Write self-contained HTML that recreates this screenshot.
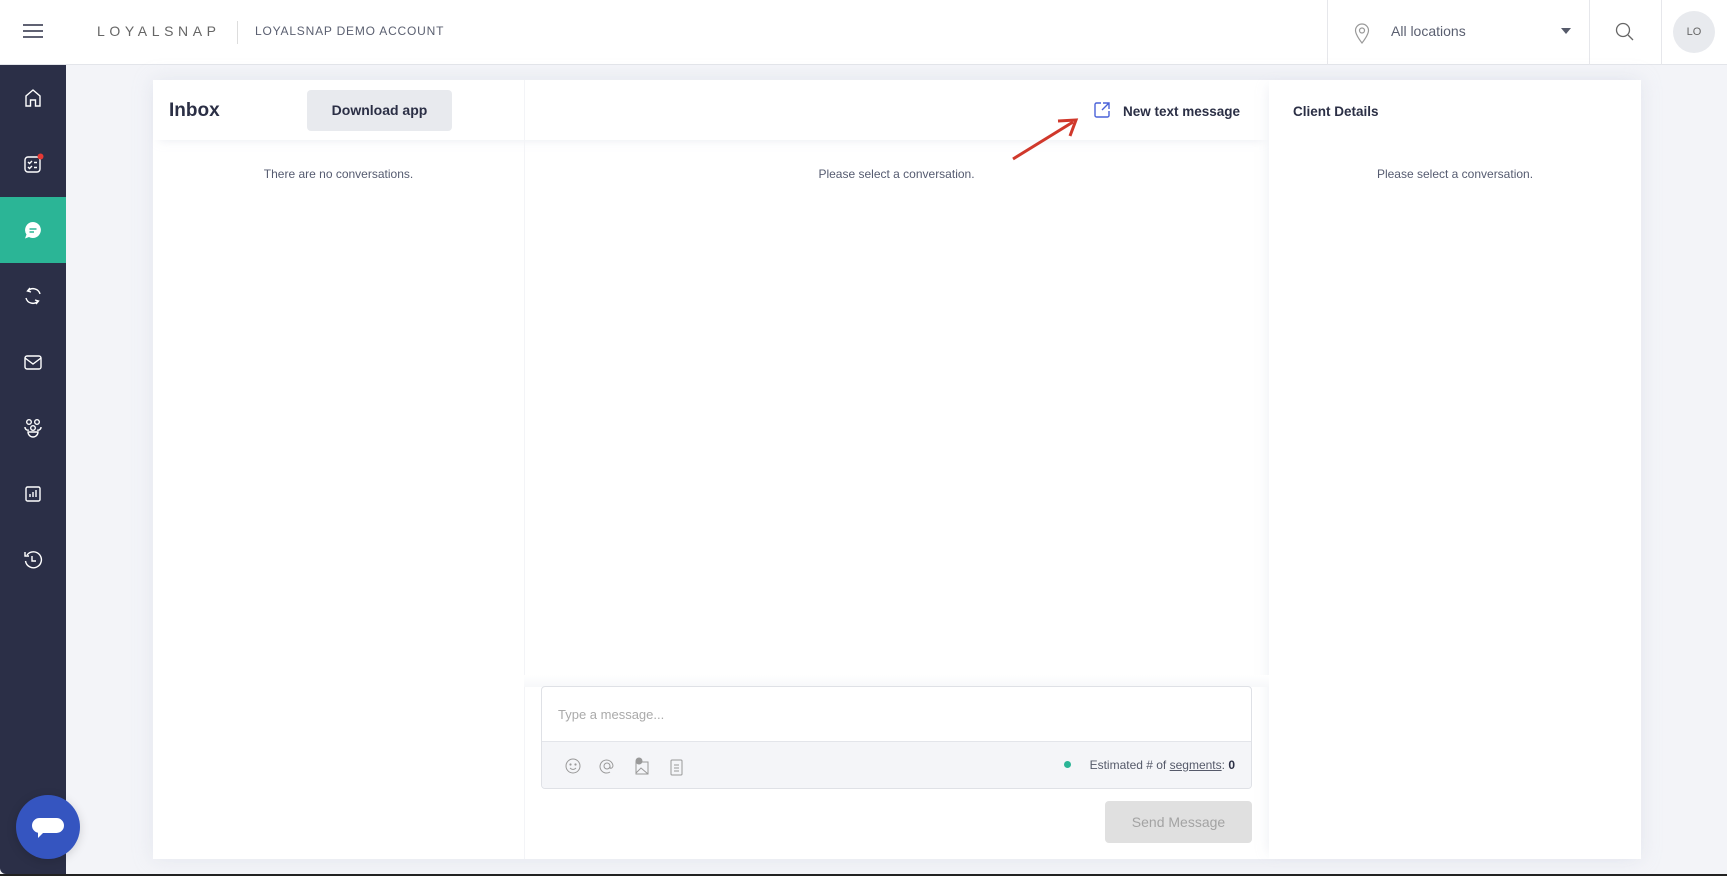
<!DOCTYPE html>
<html><head><meta charset="utf-8"><style>
*{box-sizing:border-box;margin:0;padding:0}
body{width:1727px;height:876px;overflow:hidden;background:#f3f4f8;font-family:"Liberation Sans",Roboto,sans-serif;position:relative;color:#2b2f45}
.hdr{position:absolute;left:0;top:0;width:1727px;height:65px;background:#fff;border-bottom:1px solid #e3e5ea}
.ab{position:absolute}
.side{position:absolute;left:0;top:65px;width:66px;height:809px;background:#2b2f47;border-bottom-left-radius:6px}
.side .it{position:absolute;left:0;width:66px;height:66px;display:flex;align-items:center;justify-content:center}
.card{position:absolute;left:153px;top:80px;width:1488px;height:779px;background:#fff;box-shadow:0 0 18px rgba(200,205,220,.35)}
.t12{font-size:12px;color:#555b70}
</style></head><body>
<div class="hdr">
 <svg class="ab" style="left:23px;top:23px" width="20" height="16"><path d="M0 2H20M0 8H20M0 14H20" stroke="#2b2f45" stroke-width="1.6"/></svg>
 <div class="ab" style="left:97px;top:23px;font-size:14px;letter-spacing:4.6px;color:#666">LOYALSNAP</div>
 <div class="ab" style="left:237px;top:21px;width:1px;height:23px;background:#ddd"></div>
 <div class="ab" style="left:255px;top:24px;font-size:12px;letter-spacing:0.8px;color:#5a5f70">LOYALSNAP DEMO ACCOUNT</div>
 <div class="ab" style="left:1327px;top:0;width:1px;height:65px;background:#e6e7eb"></div>
 <div class="ab" style="left:1589px;top:0;width:1px;height:65px;background:#e6e7eb"></div>
 <div class="ab" style="left:1661px;top:0;width:1px;height:65px;background:#e6e7eb"></div>
 <svg class="ab" style="left:1354px;top:22px" width="16" height="22"><path d="M8 21C8 21 1.5 13 1.5 8.5A6.5 6.5 0 0 1 14.5 8.5C14.5 13 8 21 8 21Z" fill="none" stroke="#999" stroke-width="1.2"/><circle cx="8" cy="8.5" r="2.5" fill="none" stroke="#999" stroke-width="1.2"/></svg>
 <div class="ab" style="left:1391px;top:23px;font-size:14px;color:#5a5f70">All locations</div>
 <svg class="ab" style="left:1561px;top:28px" width="10" height="7"><path d="M0 0H10L5 6Z" fill="#555a6a"/></svg>
 <svg class="ab" style="left:1615px;top:22px" width="20" height="20"><circle cx="8" cy="8" r="6.5" fill="none" stroke="#666" stroke-width="1.3"/><path d="M13 13L18 18" stroke="#666" stroke-width="1.3"/></svg>
 <div class="ab" style="left:1673px;top:11px;width:42px;height:42px;border-radius:50%;background:#e8eaee;font-size:11px;color:#666;text-align:center;line-height:42px">LO</div>
</div>
<div class="side">
 <div class="it" style="top:0"><svg width="20" height="20" fill="none" stroke="#fff" stroke-width="1.4"><path d="M3 18V8L10 2L17 8V18H12.5V12H7.5V18Z"/></svg></div>
 <div class="it" style="top:66px"><svg width="22" height="22" fill="none" stroke="#fff" stroke-width="1.4"><rect x="3" y="4" width="15" height="15" rx="3"/><path d="M6 9l1.5 1.5L10 8M12 9.5h3M6 14l1.5 1.5L10 13M12 14.5h3"/><circle cx="18.5" cy="3.5" r="3" fill="#e53935" stroke="none"/></svg></div>
 <div class="it" style="top:132px;background:#2bb596"><svg width="22" height="22"><path d="M11 3A8 8 0 1 1 7 18L3 19.5L4.5 15.5A8 8 0 0 1 11 3Z" fill="#fff"/><path d="M7.5 10H14.5M7.5 13H12" stroke="#2bb596" stroke-width="1.5"/></svg></div>
 <div class="it" style="top:198px"><svg width="22" height="22" fill="none" stroke="#fff" stroke-width="1.4"><path d="M6 6A7 7 0 0 1 18 9M16 16A7 7 0 0 1 4 13"/><path d="M8 3L5.5 6L9 7M14 19L16.5 16L13 15"/></svg></div>
 <div class="it" style="top:264px"><svg width="22" height="22" fill="none" stroke="#fff" stroke-width="1.4"><rect x="3" y="5" width="16" height="13" rx="2"/><path d="M3 7L11 13L19 7"/></svg></div>
 <div class="it" style="top:330px"><svg width="22" height="22" fill="none" stroke="#fff" stroke-width="1.4"><circle cx="7" cy="5" r="2.3"/><circle cx="15" cy="5" r="2.3"/><circle cx="11" cy="11" r="2.3"/><path d="M3 10A3 3 0 0 0 7 13M19 10A3 3 0 0 1 15 13M6 15H16A5 5 0 0 1 6 15Z"/></svg></div>
 <div class="it" style="top:396px"><svg width="22" height="22" fill="none" stroke="#fff" stroke-width="1.4"><rect x="4" y="4" width="14" height="14" rx="1.5"/><path d="M8 14V11M11 14V9M14 14V7"/></svg></div>
 <div class="it" style="top:462px"><svg width="22" height="22" fill="none" stroke="#fff" stroke-width="1.4"><path d="M5 6A8 8 0 1 1 3.5 12"/><path d="M3 3V7H7"/><path d="M10 7V12H14"/></svg></div>
</div>
<div class="card">
 <div class="ab" style="left:0;top:0;width:1116px;height:60px;box-shadow:0 6px 10px -6px rgba(200,205,220,.4)"></div>
 <div class="ab" style="left:16px;top:11px;font-size:19px;font-weight:600;color:#2b2f45;line-height:40px">Inbox</div>
 <div class="ab" style="left:154px;top:10px;width:145px;height:41px;border-radius:4px;background:#e8eaee;font-size:14px;font-weight:600;text-align:center;line-height:41px;color:#2b2f45">Download app</div>
 <svg class="ab" style="left:940px;top:21px" width="18" height="18" fill="none" stroke="#4a62d8" stroke-width="1.4"><path d="M8 2H3.5A1.5 1.5 0 0 0 2 3.5V14.5A1.5 1.5 0 0 0 3.5 16H14.5A1.5 1.5 0 0 0 16 14.5V10M10 2H16V8M16 2L9 9"/></svg>
 <div class="ab" style="left:970px;top:24px;font-size:13.5px;font-weight:600;color:#2b2f45">New text message</div>
 <svg class="ab" style="left:855px;top:35px" width="80" height="50"><path d="M5 44L65 7" stroke="#d0382b" stroke-width="3"/><path d="M50 6L68 5L62 21" fill="none" stroke="#d0382b" stroke-width="3"/></svg>
 <div class="ab" style="left:371px;top:0;width:745px;height:779px;border-left:1px solid #f3f4f7"></div>
 <div class="ab" style="left:1116px;top:0;width:372px;height:779px;background:#fff;box-shadow:-6px 0 12px -6px rgba(200,205,220,.35)"></div>
 <div class="ab" style="left:1140px;top:24px;font-size:13.5px;font-weight:600;color:#2b2f45">Client Details</div>
 <div class="ab t12" style="left:0;width:371px;top:87px;text-align:center">There are no conversations.</div>
 <div class="ab t12" style="left:371px;width:745px;top:87px;text-align:center">Please select a conversation.</div>
 <div class="ab t12" style="left:1116px;width:372px;top:87px;text-align:center">Please select a conversation.</div>
 <div class="ab" style="left:371px;top:595px;width:745px;height:12px;background:linear-gradient(#fff,#f7f8fa)"></div>
 <div class="ab" style="left:388px;top:606px;width:711px;height:103px;border:1px solid #dfe1e6;border-radius:4px;overflow:hidden">
  <div class="ab" style="left:16px;top:20px;font-size:13px;color:#aaa">Type a message...</div>
  <div class="ab" style="left:0;top:54px;width:711px;height:49px;background:#f4f5f8;border-top:1px solid #e3e5ea"></div>
  <svg class="ab" style="left:22px;top:70px" width="130" height="20" fill="none" stroke="#999" stroke-width="1"><circle cx="9" cy="9" r="7"/><circle cx="6.5" cy="7.5" r=".6" fill="#999"/><circle cx="11.5" cy="7.5" r=".6" fill="#999"/><path d="M6 11Q9 14 12 11"/><circle cx="43" cy="9" r="3"/><path d="M46 9V11Q48 12 49 9A6.5 6.5 0 1 0 46 15"/><rect x="72" y="5" width="12" height="12"/><circle cx="75" cy="4" r="3" fill="#999"/><path d="M72 16L77 11L84 17"/><rect x="107" y="3" width="11" height="15" rx="1"/><path d="M110 8H115M110 11H115M110 14H115"/></svg>
  <div class="ab" style="left:522px;top:74px;width:7px;height:7px;border-radius:50%;background:#2bb596"></div>
  <div class="ab" style="right:16px;top:71px;font-size:12px;color:#555a6a">Estimated # of <span style="text-decoration:underline">segments</span>: <b style="color:#2b2f45">0</b></div>
 </div>
 <div class="ab" style="left:952px;top:721px;width:147px;height:42px;border-radius:4px;background:#e0e0e0;font-size:14px;color:#a3a3a3;text-align:center;line-height:42px">Send Message</div>
</div>
<div class="ab" style="left:16px;top:795px;width:64px;height:64px;border-radius:50%;background:#3555c0;box-shadow:0 2px 10px rgba(0,0,0,.15)">
 <div class="ab" style="left:16px;top:23px;width:32px;height:15px;border-radius:8px;background:#fff"></div>
 <svg class="ab" style="left:22px;top:37px" width="7" height="7"><path d="M0 0H6L0 6Z" fill="#fff"/></svg>
</div>
<div class="ab" style="left:0;top:874px;width:1727px;height:2px;background:#222"></div>
</body></html>
